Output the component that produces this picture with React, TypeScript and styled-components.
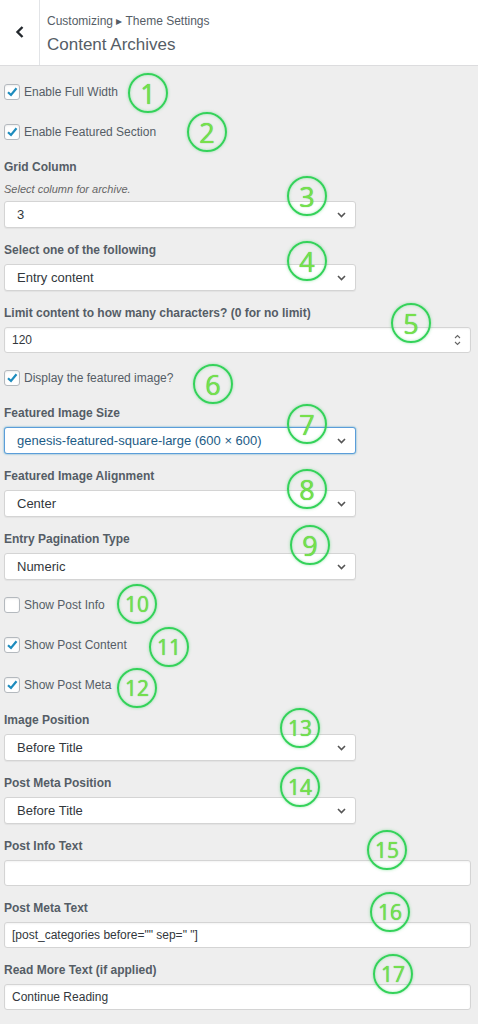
import React from 'react';
import styled, { createGlobalStyle } from 'styled-components';

const GlobalStyle = createGlobalStyle`
  html, body {
    margin: 0;
    padding: 0;
    background: #eeeeee;
  }
  body {
    font-family: "Liberation Sans", Arial, sans-serif;
    color: #555d66;
  }
`;

type Mark = { n: number; x: number; y: number };

const ChevronDown = () => (
  <svg width="9" height="6" viewBox="0 0 9 6">
    <polyline points="1,1 4.5,4.5 8,1" fill="none" stroke="#555" strokeWidth="1.6" />
  </svg>
);

const Spinner = () => (
  <svg width="7" height="12" viewBox="0 0 7 12">
    <polyline points="1,4 3.5,1.5 6,4" fill="none" stroke="#666" strokeWidth="1.1" />
    <polyline points="1,8 3.5,10.5 6,8" fill="none" stroke="#666" strokeWidth="1.1" />
  </svg>
);

const CheckMark = () => (
  <svg width="12" height="12" viewBox="0 0 12 12">
    <polyline points="2,6.2 5,9 10.5,2.2" fill="none" stroke="#1e8cbe" strokeWidth="2.2" />
  </svg>
);

const Annotation = ({ mark }: { mark: Mark }) => (
  <Circle style={{ left: mark.x, top: mark.y }} $two={mark.n > 9}>
    {mark.n}
  </Circle>
);

const Check = ({ label, checked, mark }: { label: string; checked?: boolean; mark: Mark }) => (
  <CheckRow>
    <Box>{checked && <CheckMark />}</Box>
    <CheckLabel>{label}</CheckLabel>
    <Annotation mark={mark} />
  </CheckRow>
);

const SelectField = ({
  label,
  value,
  hint,
  focused,
  mark,
}: {
  label: string;
  value: string;
  hint?: string;
  focused?: boolean;
  mark: Mark;
}) => (
  <Field>
    <Label>{label}</Label>
    {hint && <Hint>{hint}</Hint>}
    <Select $focused={focused}>
      <span>{value}</span>
      <ChevronDown />
    </Select>
    <Annotation mark={mark} />
  </Field>
);

const TextField = ({
  label,
  value,
  number,
  mark,
}: {
  label: string;
  value: string;
  number?: boolean;
  mark: Mark;
}) => (
  <Field>
    <Label>{label}</Label>
    <Input>
      <span>{value}</span>
      {number && <Spinner />}
    </Input>
    <Annotation mark={mark} />
  </Field>
);

// circle offsets are relative to the row/field top-left (x=4)
const at = (n: number, cx: number, cy: number, top: number): Mark => ({
  n,
  x: cx - 4 - 20,
  y: cy - top - 20,
});

const App = () => {
  return (
    <>
      <GlobalStyle />
      <Header>
        <Back>
          <svg width="10" height="14" viewBox="0 0 10 14">
            <polyline points="7.5,2 2.5,7 7.5,12" fill="none" stroke="#23282d" strokeWidth="2.4" />
          </svg>
        </Back>
        <Titles>
          <Crumb>Customizing ▸ Theme Settings</Crumb>
          <Title>Content Archives</Title>
        </Titles>
      </Header>
      <Panel>
        <Check label="Enable Full Width" checked mark={at(1, 148, 94, 83)} />
        <Check label="Enable Featured Section" checked mark={at(2, 207, 133, 123)} />
        <SelectField
          label="Grid Column"
          hint="Select column for archive."
          value="3"
          mark={at(3, 307, 197, 160)}
        />
        <SelectField label="Select one of the following" value="Entry content" mark={at(4, 307, 263, 244)} />
        <TextField
          label="Limit content to how many characters? (0 for no limit)"
          value="120"
          number
          mark={at(5, 411, 324, 306)}
        />
        <Check label="Display the featured image?" checked mark={at(6, 213, 386, 370)} />
        <SelectField
          label="Featured Image Size"
          value="genesis-featured-square-large (600 × 600)"
          focused
          mark={at(7, 307, 426, 407)}
        />
        <SelectField label="Featured Image Alignment" value="Center" mark={at(8, 307, 490, 469)} />
        <SelectField label="Entry Pagination Type" value="Numeric" mark={at(9, 310, 546, 532)} />
        <Check label="Show Post Info" mark={at(10, 137, 604, 595)} />
        <Check label="Show Post Content" checked mark={at(11, 169, 647, 635)} />
        <Check label="Show Post Meta" checked mark={at(12, 137, 688, 675)} />
        <SelectField label="Image Position" value="Before Title" mark={at(13, 300, 728, 712)} />
        <SelectField label="Post Meta Position" value="Before Title" mark={at(14, 300, 786, 774)} />
        <TextField label="Post Info Text" value="" mark={at(15, 387, 848, 836)} />
        <TextField
          label="Post Meta Text"
          value={'[post_categories before="" sep=" "]'}
          mark={at(16, 390, 911, 899)}
        />
        <TextField label="Read More Text (if applied)" value="Continue Reading" mark={at(17, 393, 973, 961)} />
      </Panel>
    </>
  );
};

export default App;

const Header = styled.div`
  display: flex;
  height: 65px;
  background: #fff;
  border-bottom: 1px solid #dcdcde;
`;
const Back = styled.div`
  width: 39px;
  border-right: 1px solid #e2e4e7;
  display: flex;
  align-items: center;
  justify-content: center;
  padding-bottom: 2px;
  margin-right: 7px;
`;
const Titles = styled.div`
  display: flex;
  flex-direction: column;
  padding-top: 13px;
`;
const Crumb = styled.div`
  font-size: 12px;
  line-height: 16px;
  color: #555d66;
`;
const Title = styled.div`
  font-size: 17px;
  line-height: 20px;
  margin-top: 6px;
  color: #555d66;
`;
const Panel = styled.div`
  display: flex;
  flex-direction: column;
  padding: 1px 7px 40px 4px;
`;
const CheckRow = styled.div`
  position: relative;
  display: flex;
  align-items: center;
  height: 20px;
  margin-top: 15px;
  & + & {
    margin-top: 20px;
  }
`;
const Box = styled.div`
  width: 14px;
  height: 14px;
  border: 1px solid #b4b9be;
  border-radius: 3px;
  background: #fff;
  box-shadow: inset 0 1px 2px rgba(0, 0, 0, 0.08);
  display: flex;
  align-items: center;
  justify-content: center;
  margin-right: 4px;
`;
const CheckLabel = styled.span`
  font-size: 12px;
  color: #555d66;
`;
const Field = styled.div`
  position: relative;
  margin-top: 14px;
  ${CheckRow} + & {
    margin-top: 17px;
  }
`;
const Label = styled.div`
  font-size: 12px;
  line-height: 16px;
  font-weight: 700;
  color: #555d66;
  margin-bottom: 6px;
`;
const Hint = styled.div`
  font-size: 11px;
  line-height: 16px;
  font-style: italic;
  color: #666;
  margin: 1px 0 4px;
`;
const Select = styled.div<{ $focused?: boolean }>`
  box-sizing: border-box;
  width: 352px;
  height: 27px;
  display: flex;
  align-items: center;
  justify-content: space-between;
  padding: 0 9px 0 12px;
  background: #fff;
  border: 1px solid ${(p) => (p.$focused ? '#5b9dd9' : '#d4d4d4')};
  border-radius: 3px;
  box-shadow: ${(p) =>
    p.$focused ? '0 0 2px rgba(30, 140, 190, 0.8)' : '0 1px 1px rgba(0, 0, 0, 0.05)'};
  font-size: 13px;
  color: ${(p) => (p.$focused ? '#1d5c86' : '#32373c')};
`;
const Input = styled.div`
  box-sizing: border-box;
  width: 467px;
  height: 26px;
  display: flex;
  align-items: center;
  justify-content: space-between;
  padding: 0 9px 0 7px;
  background: #fff;
  border: 1px solid #d4d4d4;
  border-radius: 3px;
  box-shadow: inset 0 1px 2px rgba(0, 0, 0, 0.05);
  font-size: 12px;
  color: #32373c;
`;
const Circle = styled.div<{ $two?: boolean }>`
  position: absolute;
  box-sizing: border-box;
  width: 40px;
  height: 40px;
  border: 2.5px solid #34d25a;
  border-radius: 50%;
  box-shadow: 0 0 3px rgba(52, 210, 90, 0.5), inset 0 0 3px rgba(52, 210, 90, 0.4);
  display: flex;
  align-items: center;
  justify-content: center;
  font-family: "Open Sans", "Liberation Sans", sans-serif;
  font-size: ${(p) => (p.$two ? '21px' : '27px')};
  color: #78e04a;
  text-shadow: 0 0 1px #2cbf55;
  pointer-events: none;
`;
